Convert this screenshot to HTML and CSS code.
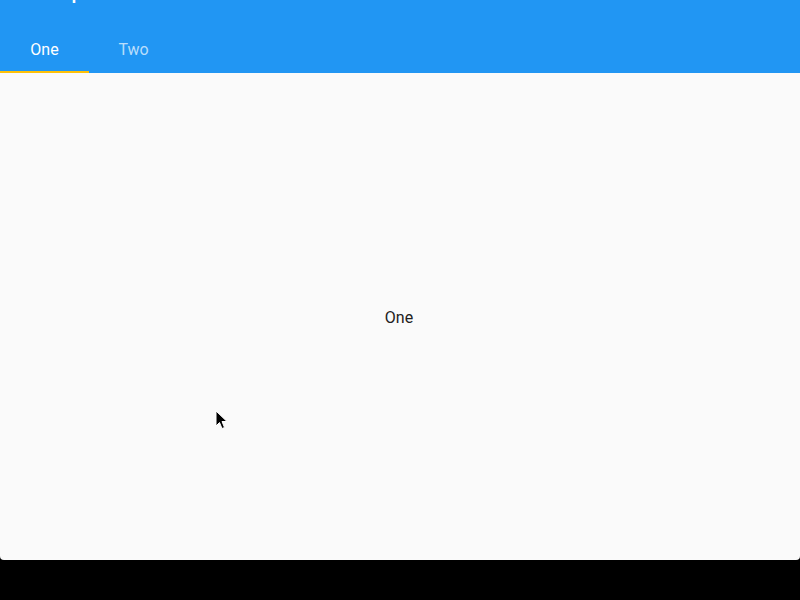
FILE: index.html
```html
<!DOCTYPE html>
<html>
<head>
<meta charset="utf-8">
<link rel="stylesheet" href="styles.css">
</head>
<body>
<div class="window">
  <header class="appbar">
    <div class="title-row"><span class="title">Example</span></div>
    <nav class="tabs">
      <div class="tab active">One</div>
      <div class="tab">Two</div>
    </nav>
  </header>
  <main class="content">
    <span class="label">One</span>
  </main>
</div>
<svg class="cursor" width="14" height="22" viewBox="0 0 14 22">
  <path d="M1 1 L1 16 L4.5 12.5 L7 18.5 L9.5 17.5 L7 11.5 L12 11.5 Z" fill="#000" stroke="#fff" stroke-width="1"/>
</svg>
</body>
</html>
```
FILE: styles.css
```css
html, body {
  margin: 0;
  padding: 0;
  background: #000;
  width: 800px;
  height: 600px;
  overflow: hidden;
  font-family: Roboto, "Liberation Sans", sans-serif;
}
.window {
  width: 800px;
  height: 560px;
  background: #fafafa;
  border-radius: 0 0 4px 4px;
  display: flex;
  flex-direction: column;
  overflow: hidden;
}
.appbar {
  background: #2196f3;
  flex: 0 0 auto;
}
.title-row {
  height: 25px;
  overflow: hidden;
  position: relative;
}
.title {
  display: block;
  padding-left: 22px;
  margin-top: -20px;
  color: #fff;
  font-size: 20px;
  line-height: 24px;
  font-weight: 500;
}
.tabs {
  display: flex;
  height: 48px;
}
.tab {
  width: 89px;
  display: flex;
  align-items: center;
  justify-content: center;
  color: rgba(255, 255, 255, 0.7);
  font-size: 16px;
  box-sizing: border-box;
  padding-top: 1px;
}
.tab.active {
  color: #fff;
  border-bottom: 2px solid #ffc107;
  padding-top: 2px;
}
.content {
  flex: 1;
  display: flex;
  align-items: center;
  justify-content: center;
}
.label {
  font-size: 16px;
  color: #212121;
  margin-left: -2px;
  padding-top: 1px;
}
.cursor {
  position: absolute;
  left: 215px;
  top: 410px;
}
```
